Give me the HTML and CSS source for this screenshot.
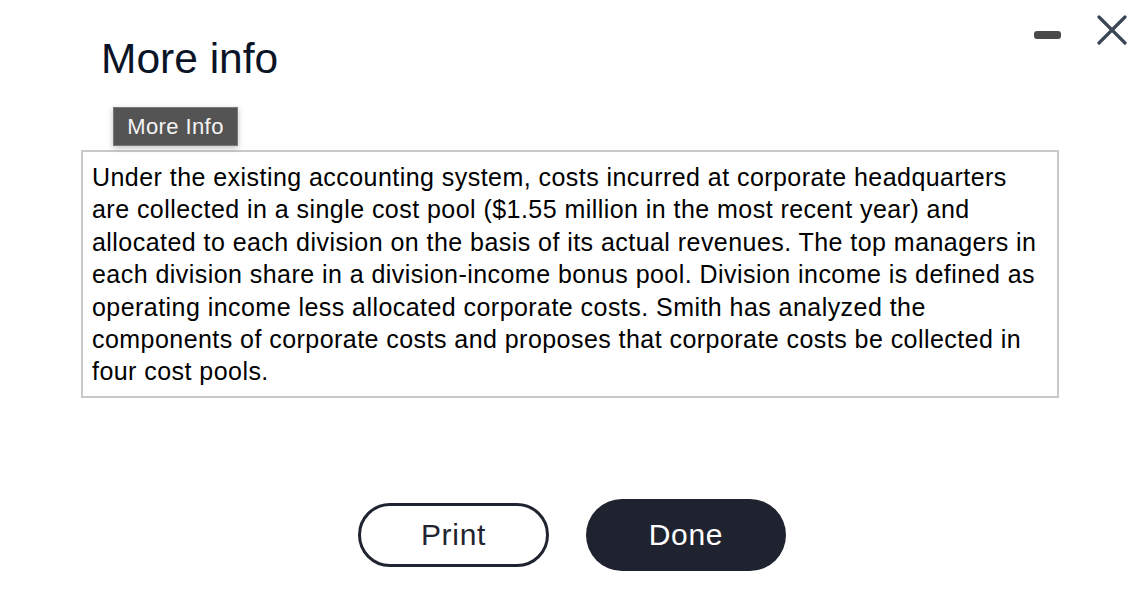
FILE: index.html
```html
<!DOCTYPE html>
<html>
<head>
<meta charset="utf-8">
<link rel="stylesheet" href="styles.css">
</head>
<body>
<div class="dialog">
  <div class="header">
    <h1 class="title">More info</h1>
    <div class="controls">
      <span class="minimize"></span>
      <svg class="close" width="30" height="30" viewBox="0 0 30 30"><path d="M2 2 L28 28 M28 2 L2 28" stroke="#3c4654" stroke-width="3.2" stroke-linecap="round" fill="none"/></svg>
    </div>
  </div>
  <div class="tab">More Info</div>
  <div class="textbox">Under the existing accounting system, costs incurred at corporate headquarters are collected in a single cost pool ($1.55 million in the most recent year) and allocated to each division on the basis of its actual revenues. The top managers in each division share in a division-income bonus pool. Division income is defined as operating income less allocated corporate costs. Smith has analyzed the components of corporate costs and proposes that corporate costs be collected in four cost pools.</div>
  <div class="actions">
    <button class="btn btn-print">Print</button>
    <button class="btn btn-done">Done</button>
  </div>
</div>
</body>
</html>
```

FILE: styles.css
```css
html, body {
  margin: 0;
  padding: 0;
  background: #ffffff;
}
body {
  font-family: "Liberation Sans", Arial, Helvetica, sans-serif;
  width: 1134px;
  height: 608px;
  overflow: hidden;
}
.dialog {
  padding: 0 0 0 81px;
}
.header {
  display: flex;
  justify-content: space-between;
  align-items: flex-start;
  height: 100px;
}
.title {
  margin: 34px 0 0 20px;
  font-size: 42.5px;
  font-weight: normal;
  color: #0b1426;
  line-height: 50px;
}
.controls {
  display: flex;
  align-items: flex-start;
  margin-top: 15px;
  margin-right: 7px;
}
.minimize {
  display: block;
  width: 27px;
  height: 8px;
  border-radius: 3px;
  background: #4a4a4a;
  margin: 16px 36px 0 0;
}
.close {
  display: block;
}
.tab {
  display: inline-flex;
  align-items: center;
  justify-content: center;
  box-sizing: border-box;
  margin: 7px 0 0 32px;
  width: 125px;
  height: 39px;
  background: #545454;
  border: 1px solid #7a7a7a;
  color: #f4f4f4;
  font-size: 22px;
  letter-spacing: 0.4px;
  box-shadow: 0 2px 6px rgba(0,0,0,0.25);
}
.textbox {
  box-sizing: border-box;
  width: 978px;
  height: 248px;
  margin-top: 4px;
  border: 2px solid #c9c9c9;
  padding: 9px 18px 8px 9px;
  font-size: 25px;
  letter-spacing: 0.45px;
  line-height: 32.4px;
  color: #000000;
}
.actions {
  display: flex;
  align-items: center;
  gap: 37px;
  margin: 101px 0 0 277px;
}
.btn {
  box-sizing: border-box;
  font-family: "Liberation Sans", Arial, Helvetica, sans-serif;
  font-size: 30px;
  letter-spacing: 0.7px;
  border-radius: 40px;
  padding: 0;
  cursor: pointer;
}
.btn-print {
  width: 191px;
  height: 64px;
  border: 3px solid #1f2430;
  background: #ffffff;
  color: #1f2430;
}
.btn-done {
  width: 200px;
  height: 72px;
  border: none;
  background: #1f2330;
  color: #ffffff;
}
```
